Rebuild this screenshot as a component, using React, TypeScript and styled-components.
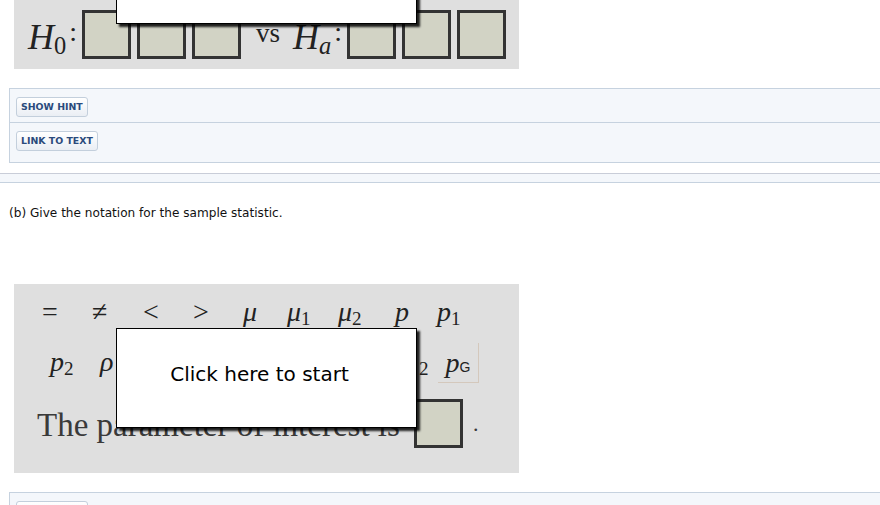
import React from 'react';
import styled, { createGlobalStyle } from 'styled-components';

const GlobalStyle = createGlobalStyle`
    html, body {
        margin: 0;
        padding: 0;
        background: #ffffff;
    }
`

const Page = styled.div`
    width: 880px;
    height: 505px;
    overflow: hidden;
    padding-left: 9px;
    box-sizing: border-box;
    font-family: "DejaVu Sans", Verdana, sans-serif;
`

const MathPanel = styled.div<{ $height: number }>`
    position: relative;
    margin-left: 5px;
    width: 505px;
    height: ${(p) => p.$height}px;
    background: #dfdfdf;
    font-family: "Liberation Serif", "DejaVu Serif", serif;
    color: #222;
`

const HypRow = styled.div`
    height: 100%;
    display: flex;
    align-items: center;
    padding-left: 14px;
`

const MathVar = styled.span`
    font-style: italic;
    font-size: 36px;
    line-height: 1;
    position: relative;
    top: 4px;
`

const Sub = styled.sub<{ $italic?: boolean; $sans?: boolean }>`
    font-style: ${(p) => (p.$italic ? 'italic' : 'normal')};
    font-family: ${(p) => (p.$sans ? '"Liberation Sans", Arial, sans-serif' : 'inherit')};
    font-size: ${(p) => (p.$sans ? '0.5em' : '0.68em')};
    vertical-align: -0.2em;
`

const Colon = styled.span<{ $right: number }>`
    font-size: 28px;
    margin: 0 ${(p) => p.$right}px 0 3px;
    position: relative;
    top: -3px;
`

const Upright = styled.span`
    font-size: 27px;
    margin: 0 13px 0 15px;
    position: relative;
    top: -1px;
`

const BoxGroup = styled.div`
    display: flex;
    gap: 6px;
`

const DropBox = styled.div`
    width: 49px;
    height: 49px;
    box-sizing: border-box;
    border: 3px solid #333;
    background: #d2d3c5;
`

const Popup = styled.div<{ $top: number }>`
    position: absolute;
    left: 102px;
    top: ${(p) => p.$top}px;
    width: 301px;
    height: 100px;
    box-sizing: border-box;
    padding: 0 14px 8px 0;
    background: #fff;
    border: 1px solid #000;
    box-shadow: 3px 3px 2px rgba(0, 0, 0, 0.85);
    display: flex;
    align-items: center;
    justify-content: center;
    font-family: "DejaVu Sans", Verdana, sans-serif;
    font-size: 20px;
    color: #000;
    z-index: 2;
`

const HintPanel = styled.div`
    margin-top: 19px;
    border: 1px solid #c6d2df;
    border-right: none;
    background: #f4f7fb;
`

const HintRow = styled.div<{ $height: number }>`
    height: ${(p) => p.$height}px;
    padding: 6px 6px 0;
    box-sizing: border-box;
    & + & {
        border-top: 1px solid #c6d2df;
    }
`

const SmallButton = styled.button`
    height: 20px;
    padding: 0 4px;
    border: 1px solid #c3cfdc;
    border-radius: 3px;
    background: linear-gradient(#ffffff, #eaeef4);
    color: #2a4a7c;
    font-family: "DejaVu Sans", Verdana, sans-serif;
    font-weight: bold;
    font-size: 9.4px;
    cursor: pointer;
`

const Strip = styled.div`
    margin-top: 10px;
    height: 8px;
    border-top: 1px solid #c9cdd8;
    border-bottom: 1px solid #c6d2df;
    background: #f4f7fb;
    margin-left: -9px;
`

const Question = styled.p`
    margin: 23px 0 64px;
    font-size: 12.1px;
    color: #111;
`

const SymbolPanelBody = styled.div`
    padding-top: 7px;
`

const SymbolRow = styled.div<{ $left: number; $height: number }>`
    display: flex;
    align-items: flex-start;
    height: ${(p) => p.$height}px;
    padding-left: ${(p) => p.$left}px;
`

const Symbol = styled.span<{ $w: number; $italic?: boolean }>`
    width: ${(p) => p.$w}px;
    flex: 0 0 auto;
    font-size: 28px;
    font-style: ${(p) => (p.$italic ? 'italic' : 'normal')};
    line-height: 42px;
    white-space: nowrap;
`

const ToolButton = styled.span`
    display: inline-flex;
    align-items: baseline;
    justify-content: center;
    width: 41px;
    height: 40px;
    line-height: 40px;
    box-sizing: border-box;
    border-right: 1px solid #d4c8bc;
    border-bottom: 1px solid #d4c8bc;
    font-size: 28px;
    font-style: italic;
    margin-top: 2px;
`

const SentenceRow = styled.div`
    display: flex;
    align-items: center;
    padding-left: 23px;
    margin-top: 16px;
    color: #3a3a3a;
`

const Sentence = styled.span`
    font-size: 33px;
    width: 377px;
    white-space: nowrap;
    position: relative;
    top: 2px;
`

const Period = styled.span`
    font-size: 22px;
    margin-left: 10px;
`

const BottomPanel = styled.div`
    margin-top: 19px;
    border: 1px solid #c6d2df;
    border-right: none;
    background: #f4f7fb;
    height: 40px;
    padding: 6px 6px 0;
    box-sizing: border-box;
`

const row1 = [
    { t: '=', w: 50 },
    { t: '≠', w: 51 },
    { t: '<', w: 50 },
    { t: '>', w: 50 },
    { t: 'μ', w: 44, i: true },
    { t: 'μ', s: '1', w: 51, i: true },
    { t: 'μ', s: '2', w: 57, i: true },
    { t: 'p', w: 42, i: true },
    { t: 'p', s: '1', w: 40, i: true },
]

const App = () => {
    return (
        <>
            <GlobalStyle />
            <Page>
                <MathPanel $height={69}>
                    <Popup $top={-76} />
                    <HypRow>
                        <MathVar>H<Sub>0</Sub></MathVar>
                        <Colon $right={5}>:</Colon>
                        <BoxGroup>
                            <DropBox /><DropBox /><DropBox />
                        </BoxGroup>
                        <Upright>vs</Upright>
                        <MathVar>H<Sub $italic>a</Sub></MathVar>
                        <Colon $right={5}>:</Colon>
                        <BoxGroup>
                            <DropBox /><DropBox /><DropBox />
                        </BoxGroup>
                    </HypRow>
                </MathPanel>

                <HintPanel>
                    <HintRow $height={33}>
                        <SmallButton>SHOW HINT</SmallButton>
                    </HintRow>
                    <HintRow $height={40}>
                        <SmallButton>LINK TO TEXT</SmallButton>
                    </HintRow>
                </HintPanel>

                <Strip />

                <Question>(b) Give the notation for the sample statistic.</Question>

                <MathPanel $height={189}>
                    <Popup $top={44}>Click here to start</Popup>
                    <SymbolPanelBody>
                        <SymbolRow $left={28} $height={50}>
                            {row1.map((s, idx) => (
                                <Symbol key={idx} $w={s.w} $italic={s.i}>
                                    {s.t}{s.s ? <Sub>{s.s}</Sub> : null}
                                </Symbol>
                            ))}
                        </SymbolRow>
                        <SymbolRow $left={36} $height={42}>
                            <Symbol $w={50} $italic>p<Sub>2</Sub></Symbol>
                            <Symbol $w={319} $italic>ρ</Symbol>
                            <Symbol $w={19}><Sub>2</Sub></Symbol>
                            <ToolButton>p<Sub $sans>G</Sub></ToolButton>
                        </SymbolRow>
                        <SentenceRow>
                            <Sentence>The parameter of interest is</Sentence>
                            <DropBox />
                            <Period>.</Period>
                        </SentenceRow>
                    </SymbolPanelBody>
                </MathPanel>

                <BottomPanel>
                    <SmallButton>SHOW HINT</SmallButton>
                </BottomPanel>
            </Page>
        </>
    )
}

export default App;
